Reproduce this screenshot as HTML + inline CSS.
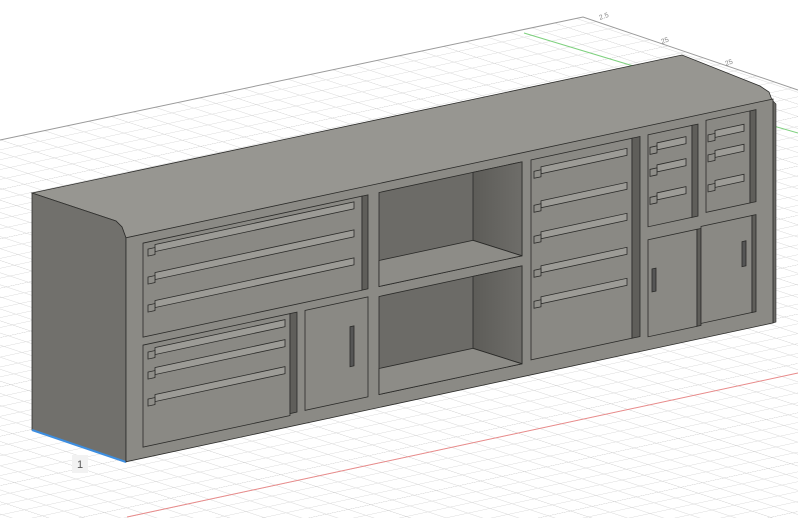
<!DOCTYPE html>
<html><head><meta charset="utf-8"><style>
html,body{margin:0;padding:0;background:#fff;}
svg{display:block}
</style></head><body>
<svg width="798" height="518" viewBox="0 0 798 518" xmlns="http://www.w3.org/2000/svg">
<defs>
<pattern id="g" width="50" height="50" patternUnits="userSpaceOnUse" patternTransform="matrix(2.2,-0.473,1.8,0.6,0,140)">
<path d="M10 0V50M20 0V50M30 0V50M40 0V50M0 10H50M0 20H50M0 30H50M0 40H50" stroke="#dedede" stroke-width="0.5" fill="none"/>
<path d="M0 0V50M0 0H50" stroke="#c4c4c4" stroke-width="0.6" fill="none"/>
</pattern>
<linearGradient id="rw" x1="0" x2="1" y1="0" y2="0"><stop offset="0" stop-color="#5d5c58"/><stop offset="1" stop-color="#6e6d69"/></linearGradient>
</defs>
<polygon points="0,140 583,17 798,90 798,518 0,518" fill="url(#g)"/>
<polyline points="0,140 583,17 798,90" fill="none" stroke="#9a9a9a" stroke-width="1"/>
<line x1="127" y1="517" x2="798" y2="373" stroke="#e88a8a" stroke-width="1"/>
<line x1="524" y1="33" x2="640" y2="68" stroke="#7ed07e" stroke-width="1"/>
<line x1="770" y1="125" x2="798" y2="133" stroke="#7ed07e" stroke-width="1"/>
<g font-family="Liberation Sans,sans-serif" font-size="7" fill="#888">
<text x="600" y="20" transform="rotate(-20 600 20)">2.5</text>
<text x="662" y="44" transform="rotate(-20 662 44)">25</text>
<text x="726" y="66" transform="rotate(-20 726 66)">25</text>
</g>
<!-- top -->
<polygon points="32,193 682,55 760,86 769,92 772,100 126,238 122,227 116,221" fill="#979691" stroke="#2e2e2c" stroke-width="0.8"/>
<!-- side -->
<polygon points="32,193 116,221 122,227 126,238 126,462 32,430" fill="#71706c" stroke="#2e2e2c" stroke-width="0.8"/>
<line x1="32" y1="430" x2="126" y2="462" stroke="#3d8ee0" stroke-width="2"/>
<polygon points="772,100 776,104 776,322 773,323" fill="#6a6965" stroke="#2e2e2c" stroke-width="0.6"/>
<!-- front -->
<g transform="matrix(1,-0.2145,0,1,0,256.8)" stroke="#2a2a28" stroke-width="0.8">
<rect x="126" y="8" width="647" height="224" fill="#8b8a85"/>
<rect x="143" y="17" width="219" height="94" fill="#8a8984"/>
<rect x="362" y="17" width="6" height="94" fill="#5f5e5a"/>
<rect x="143" y="119" width="147" height="102" fill="#8a8984"/>
<rect x="290" y="119" width="7" height="100" fill="#5f5e5a"/>
<rect x="305" y="119" width="63" height="100" fill="#8a8984"/>
<rect x="350" y="145" width="4" height="40" fill="#555" />
<g>
<rect x="379" y="17" width="143" height="94" fill="#6c6b67"/>
<polygon points="473,17 522,17 522,111 473,85" fill="url(#rw)"/>
<polygon points="379,85 473,85 522,111 379,111" fill="#8d8c87"/>
<rect x="379" y="121" width="143" height="98" fill="#6c6b67"/>
<polygon points="473,121 522,121 522,219 473,193" fill="url(#rw)"/>
<polygon points="379,193 473,193 522,219 379,219" fill="#8d8c87"/>
</g>
<rect x="531" y="17" width="101" height="200" fill="#8a8984"/>
<rect x="632" y="17" width="8" height="200" fill="#5f5e5a"/>
<rect x="648" y="17" width="44" height="92" fill="#8a8984"/>
<rect x="692" y="17" width="6" height="92" fill="#5f5e5a"/>
<rect x="706" y="15" width="44" height="92" fill="#8a8984"/>
<rect x="750" y="15" width="6" height="92" fill="#5f5e5a"/>
<rect x="648" y="122" width="49" height="97" fill="#8a8984"/>
<rect x="697" y="122" width="4" height="97" fill="#5f5e5a"/>
<rect x="701" y="120" width="51" height="97" fill="#8a8984"/>
<rect x="752" y="120" width="4" height="97" fill="#5f5e5a"/>
<rect x="652" y="152" width="4" height="23" fill="#555"/>
<rect x="742" y="144" width="4" height="25" fill="#555"/>
<g fill="#9c9b96">
<rect x="155" y="21" width="199" height="7"/><rect x="155" y="49" width="199" height="7"/><rect x="155" y="77" width="199" height="7"/>
<rect x="155" y="124" width="130" height="7"/><rect x="155" y="144" width="130" height="7"/><rect x="155" y="171" width="130" height="7"/>
<rect x="541" y="26" width="86" height="7"/><rect x="541" y="60" width="86" height="7"/><rect x="541" y="91" width="86" height="7"/><rect x="541" y="125" width="86" height="7"/><rect x="541" y="156" width="86" height="7"/>
<rect x="657" y="27" width="29" height="7"/><rect x="657" y="49" width="29" height="7"/><rect x="657" y="77" width="29" height="7"/>
<rect x="715" y="27" width="29" height="7"/><rect x="715" y="47" width="29" height="7"/><rect x="715" y="77" width="29" height="7"/>
</g>
<g fill="#8f8e89">
<rect x="148" y="24" width="7" height="7"/><rect x="148" y="52" width="7" height="7"/><rect x="148" y="80" width="7" height="7"/>
<rect x="148" y="127" width="7" height="7"/><rect x="148" y="147" width="7" height="7"/><rect x="148" y="174" width="7" height="7"/>
<rect x="534" y="29" width="7" height="7"/><rect x="534" y="63" width="7" height="7"/><rect x="534" y="94" width="7" height="7"/><rect x="534" y="128" width="7" height="7"/><rect x="534" y="159" width="7" height="7"/>
<rect x="650" y="30" width="7" height="7"/><rect x="650" y="52" width="7" height="7"/><rect x="650" y="80" width="7" height="7"/>
<rect x="708" y="30" width="7" height="7"/><rect x="708" y="50" width="7" height="7"/><rect x="708" y="80" width="7" height="7"/>
</g>
</g>
<rect x="72" y="455" width="16" height="18" fill="#f2f2f2"/>
<text x="77" y="468" font-family="Liberation Sans,sans-serif" font-size="11" fill="#555">1</text>
</svg>
</body></html>
